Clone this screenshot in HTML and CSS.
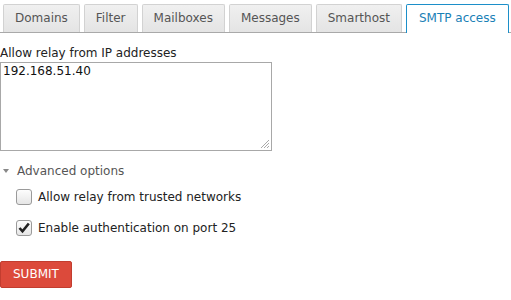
FILE: index.html
```html
<!DOCTYPE html>
<html>
<head>
<meta charset="utf-8">
<link rel="stylesheet" href="styles.css">
</head>
<body>
<ul class="tabs">
  <li class="tab">Domains</li>
  <li class="tab">Filter</li>
  <li class="tab">Mailboxes</li>
  <li class="tab">Messages</li>
  <li class="tab">Smarthost</li>
  <li class="tab active">SMTP access</li>
</ul>
<form class="form">
  <label class="field-label">Allow relay from IP addresses</label>
  <div class="textarea">
    <div class="textarea-text">192.168.51.40</div>
    <svg class="grip" width="10" height="10" viewBox="0 0 10 10">
      <path d="M9 1L1 9M9 4L4 9M9 7L7 9" stroke="#aaa" stroke-width="1"/>
    </svg>
  </div>
  <div class="advanced">
    <span class="caret"></span>
    <span class="advanced-text">Advanced options</span>
  </div>
  <div class="check-row first">
    <span class="box"></span>
    <span class="check-label">Allow relay from trusted networks</span>
  </div>
  <div class="check-row">
    <span class="box">
      <svg width="16" height="16" viewBox="0 0 16 16"><path d="M3.5 8L6.5 11.3L12.8 3.5" fill="none" stroke="#222" stroke-width="2.6"/></svg>
    </span>
    <span class="check-label">Enable authentication on port 25</span>
  </div>
  <div class="actions">
    <span class="submit">SUBMIT</span>
  </div>
</form>
</body>
</html>
```
FILE: styles.css
```css
html, body {
  margin: 0;
  padding: 0;
  background: #fff;
  font-family: "DejaVu Sans", sans-serif;
  font-size: 12px;
  color: #222;
}
.tabs {
  list-style: none;
  margin: 0;
  padding: 4px 0 0 3px;
  display: flex;
  gap: 4px;
  border-bottom: 1px solid #a9a9a9;
  height: 28px;
}
.tab {
  flex: none;
  white-space: nowrap;
  height: 27px;
  line-height: 27px;
  padding: 0 11px;
  border: 1px solid #d2d2d2;
  border-bottom: none;
  background: linear-gradient(#f0f0f0, #e4e4e4);
  color: #555;
  border-radius: 2px 2px 0 0;
}
.tab.active {
  background: #fff;
  border-color: #1c8fc9;
  color: #1a80b6;
  height: 28px;
  margin-bottom: -1px;
  padding: 0 12px;
}
.form {
  display: flex;
  flex-direction: column;
  align-items: flex-start;
}
.field-label {
  margin-top: 12px;
  line-height: 16px;
}
.textarea {
  position: relative;
  box-sizing: border-box;
  width: 272px;
  height: 89px;
  margin-top: 1px;
  border: 1px solid #a8a8a8;
  padding: 1px 2px;
}
.textarea-text {
  line-height: 15px;
  color: #111;
}
.grip {
  position: absolute;
  right: 1px;
  bottom: 1px;
}
.advanced {
  margin-top: 12px;
  display: flex;
  align-items: center;
  height: 16px;
  color: #555;
}
.caret {
  width: 0;
  height: 0;
  margin-left: 3px;
  margin-right: 8px;
  border-left: 3.5px solid transparent;
  border-right: 3.5px solid transparent;
  border-top: 4px solid #888;
}
.check-row {
  display: flex;
  align-items: center;
  margin-left: 16px;
  margin-top: 15px;
  height: 16px;
}
.check-row.first {
  margin-top: 10px;
}
.box {
  box-sizing: border-box;
  width: 16px;
  height: 16px;
  border: 1px solid #9a9a9a;
  border-radius: 3px;
  background: linear-gradient(#fdfdfd, #e6e6e6);
  display: flex;
  align-items: center;
  justify-content: center;
  margin-right: 6px;
}
.box svg {
  display: block;
  flex: none;
  margin: -1px;
}
.check-label {
  line-height: 16px;
  color: #222;
}
.actions {
  margin-top: 25px;
}
.submit {
  display: block;
  box-sizing: border-box;
  height: 27px;
  line-height: 25px;
  padding: 0 12px;
  background: #dc4a3b;
  border: 1px solid #c23d2f;
  border-radius: 2px;
  color: #fff;
}
```
